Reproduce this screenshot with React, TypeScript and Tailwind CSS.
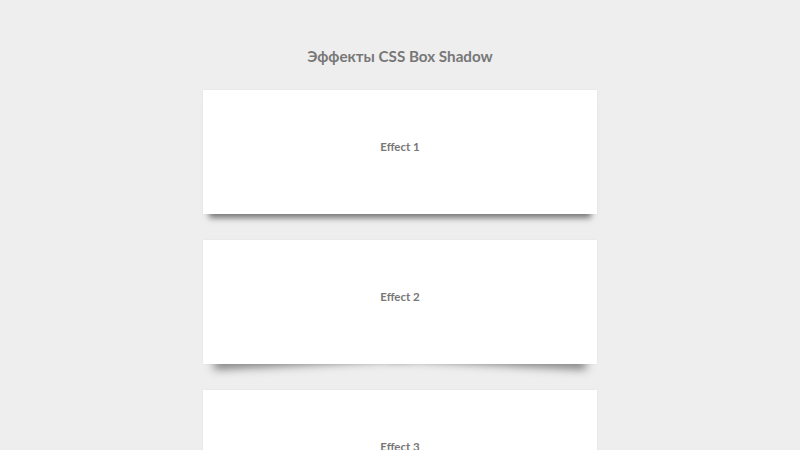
const boxes = ["Effect 1", "Effect 2", "Effect 3", "Effect 4"];

const App = () => {
  return (
    <div className="min-h-screen bg-[#eeeeee] pt-[45px] font-['Lato','Open_Sans',sans-serif] text-[#777]">
      <h1 className="text-center text-[15.2px] leading-[22px] font-bold mb-[23px]">Эффекты CSS Box Shadow</h1>

      <div className="flex flex-col items-center gap-[26px] pb-10">
        {/* effect 1: flat drop shadow under the bottom edge */}
        <div className="w-[394px] h-[124px] bg-white flex items-center justify-center pb-[10px] shadow-[0_10px_6px_-6px_#777,0_0_2px_rgba(0,0,0,0.06)]">
          <span className="text-[11.5px] font-bold">{boxes[0]}</span>
        </div>

        {/* effect 2: lifted corners */}
        <div className="relative isolate">
          <span className="absolute -z-10 left-[10px] bottom-[15px] top-[80%] w-1/2 bg-[#777] shadow-[0_15px_10px_#777] -rotate-3" />
          <span className="absolute -z-10 right-[10px] bottom-[15px] top-[80%] w-1/2 bg-[#777] shadow-[0_15px_10px_#777] rotate-3" />
          <div className="relative w-[394px] h-[124px] bg-white flex items-center justify-center pb-[10px] shadow-[0_0_2px_rgba(0,0,0,0.06)]">
            <span className="text-[11.5px] font-bold">{boxes[1]}</span>
          </div>
        </div>

        {/* effect 3 */}
        <div className="w-[394px] h-[124px] bg-white flex items-center justify-center pb-[10px] shadow-[0_0_2px_rgba(0,0,0,0.06)]">
          <span className="text-[11.5px] font-bold">{boxes[2]}</span>
        </div>
      </div>
    </div>
  );
};

export default App;
